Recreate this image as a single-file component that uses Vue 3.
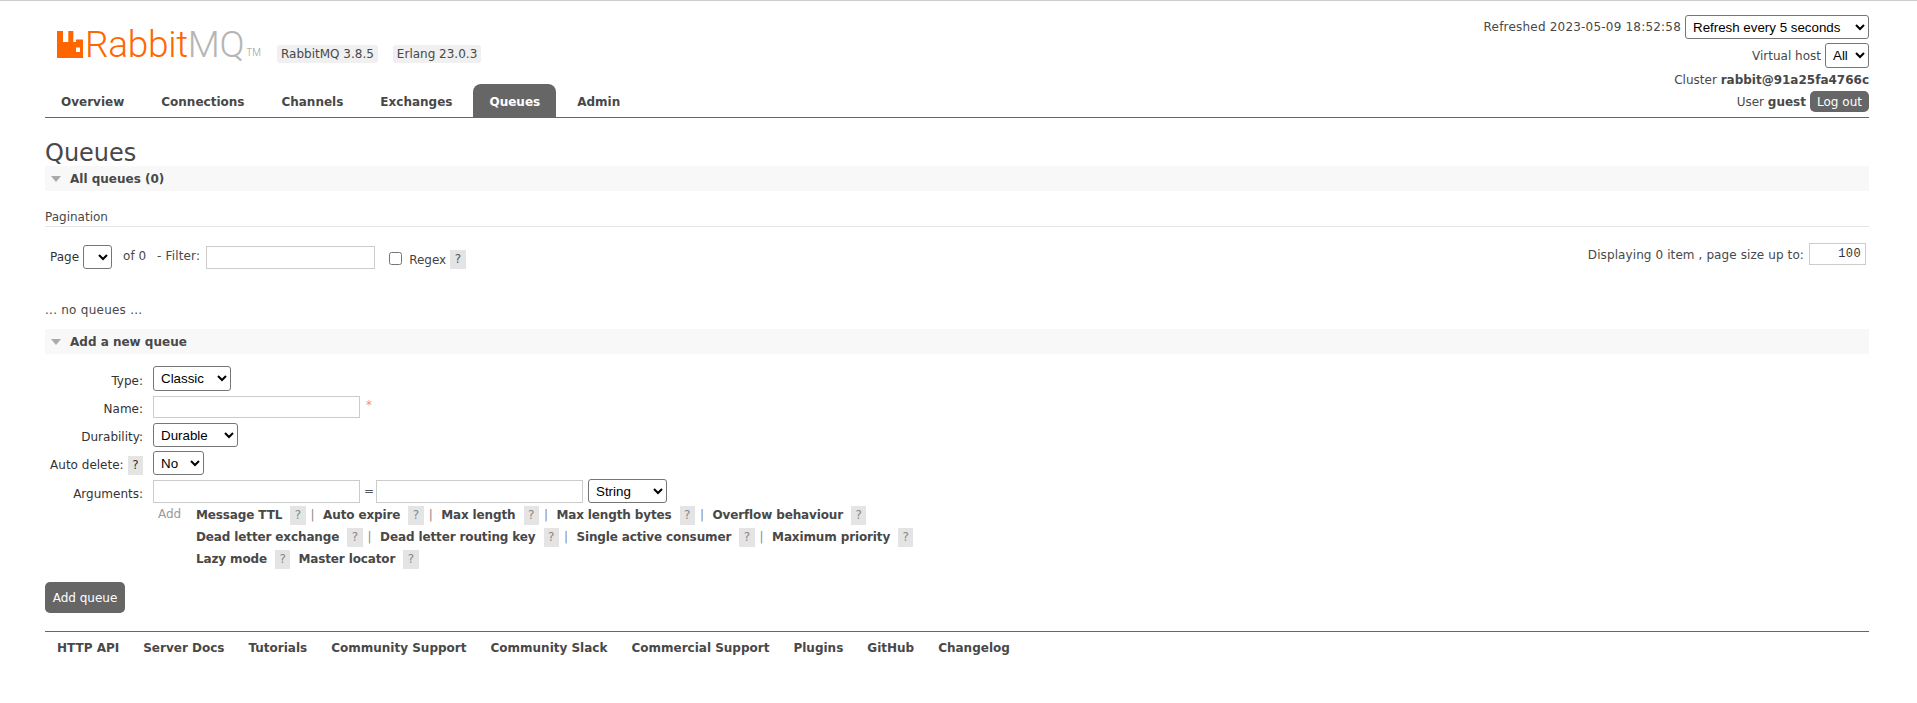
<script setup>
const tabs = ['Overview', 'Connections', 'Channels', 'Exchanges', 'Queues', 'Admin']
const footer = ['HTTP API', 'Server Docs', 'Tutorials', 'Community Support', 'Community Slack', 'Commercial Support', 'Plugins', 'GitHub', 'Changelog']
const argRows = [
  ['Message TTL', 'Auto expire', 'Max length', 'Max length bytes', 'Overflow behaviour'],
  ['Dead letter exchange', 'Dead letter routing key', 'Single active consumer', 'Maximum priority'],
  ['Lazy mode', 'Master locator'],
]
</script>

<template>
  <div class="page">
    <header class="header">
      <div class="brand">
        <div class="logo-row">
          <div class="logo">
            <svg class="mark" width="26" height="27" viewBox="0 0 26 27">
              <path fill="#ff6600" fill-rule="evenodd" d="M0 0h6v11h5.300V0h5v11h2.700V8.500H26V27H0zM19 16.500v4.500h4v-4.500z" />
            </svg>
            <span class="word"><span class="rabbit">Rabbit</span><span class="mq">MQ</span></span>
            <span class="tm">TM</span>
          </div>
          <span class="chip">RabbitMQ 3.8.5</span>
          <span class="chip">Erlang 23.0.3</span>
        </div>
        <nav class="tabs">
          <a v-for="t in tabs" :key="t" class="tab" :class="{ active: t === 'Queues' }">{{ t }}</a>
        </nav>
      </div>
      <div class="status">
        <div class="status-line refresh">
          <span class="stamp">Refreshed 2023-05-09 18:52:58</span>
          <select class="sel sel-refresh"><option>Refresh every 5 seconds</option></select>
        </div>
        <div class="status-line vhost">
          <span>Virtual host</span>
          <select class="sel sel-all"><option>All</option></select>
        </div>
        <div class="status-line cluster"><span>Cluster <b>rabbit@91a25fa4766c</b></span></div>
        <div class="status-line user">
          <span>User <b>guest</b></span>
          <button class="logout">Log out</button>
        </div>
      </div>
    </header>

    <main>
      <h1>Queues</h1>
      <div class="section-bar"><i class="arrow"></i>All queues (0)</div>

      <h3 class="pagination-title">Pagination</h3>
      <div class="pagination">
        <div class="pg-left">
          <span class="pg-label">Page</span>
          <select class="sel sel-page"></select>
          <span class="of">of 0</span>
          <span class="filter">- Filter:</span>
          <input class="inp inp-filter" type="text" />
          <input class="check" type="checkbox" />
          <span class="regex">Regex</span>
          <span class="help help-regex">?</span>
        </div>
        <div class="pg-right">
          <span>Displaying 0 item , page size up to:</span>
          <input class="inp inp-size" type="text" value="100" />
        </div>
      </div>

      <p class="none">... no queues ...</p>

      <div class="section-bar add-bar"><i class="arrow"></i>Add a new queue</div>

      <div class="form">
        <label class="row-type">Type:</label>
        <div class="field row-type"><select class="sel sel-type"><option>Classic</option></select></div>

        <label class="row-name">Name:</label>
        <div class="field row-name"><input class="inp inp-long" type="text" /><span class="req">*</span></div>

        <label class="row-dur">Durability:</label>
        <div class="field row-dur"><select class="sel sel-dur"><option>Durable</option></select></div>

        <label class="row-auto">Auto delete: <span class="help help-label">?</span></label>
        <div class="field row-auto"><select class="sel sel-no"><option>No</option></select></div>

        <label class="row-args">Arguments:</label>
        <div class="field row-args">
          <input class="inp inp-long inp-arg" type="text" />
          <span class="eq">=</span>
          <input class="inp inp-long inp-arg" type="text" />
          <select class="sel sel-str"><option>String</option></select>
        </div>

        <div class="args-help">
          <span class="add-link">Add</span>
          <div class="arg-lines">
            <div v-for="(r, i) in argRows" :key="i" class="arg-line">
              <template v-for="(a, j) in r" :key="a">
                <b>{{ a }}</b><span class="help">?</span><span v-if="j < r.length - 1" class="sep" :class="{ blank: i === 2 }"><template v-if="i < 2">|</template></span>
              </template>
            </div>
          </div>
        </div>
      </div>

      <button class="add-btn">Add queue</button>
    </main>

    <footer class="footer">
      <a v-for="f in footer" :key="f">{{ f }}</a>
    </footer>
  </div>
</template>

<style>
html, body { margin: 0; background: #fff; }
</style>

<style scoped>
.page {
  border-top: 1px solid #ccc;
  padding: 0 48px 0 45px;
  font: 12px Verdana, "DejaVu Sans", sans-serif;
  color: #484848;
}
b { font-weight: bold; }

.header {
  display: flex;
  justify-content: space-between;
  height: 116px;
  border-bottom: 1px solid #666;
}
.brand { display: flex; flex-direction: column; }
.logo-row { display: flex; align-items: flex-end; height: 62px; padding-left: 12px; }
.logo { display: flex; align-items: flex-end; width: 205px; height: 27px; margin-bottom: 5px; flex: none; }
.mark { flex: none; }
.word {
  font: 300 37px/27px Roboto, sans-serif;
  letter-spacing: -0.3px;
  margin-left: 2px;
  white-space: nowrap;
}
.rabbit { color: #ff6600; }
.mq { color: #b5b5b5; }
.tm { font: 300 10px/10px Roboto, sans-serif; color: #999; margin-left: 2px; }
.chip {
  background: #f0f0f0;
  border-radius: 3px;
  padding: 2px 4px;
  height: 14px;
  line-height: 14px;
  font-size: 12px;
  margin-left: 15px;
  white-space: nowrap;
}

.tabs { display: flex; gap: 5px; margin-top: 21px; height: 33px; }
.tab {
  font-weight: bold;
  padding: 0 16px;
  line-height: 36px;
  color: #484848;
  white-space: nowrap;
}
.tab.active { background: #666; color: #fff; border-radius: 8px 8px 0 0; }

.status { display: flex; flex-direction: column; align-items: flex-end; padding-top: 14px; }
.status-line { display: flex; align-items: center; gap: 4px; white-space: nowrap; }
.stamp { letter-spacing: 0.2px; }
.refresh { height: 24px; }
.vhost { height: 25px; margin-top: 4px; }
.cluster { height: 14px; margin-top: 5px; }
.user { height: 21px; margin-top: 4px; }
.sel {
  font: 13.333px "Liberation Sans", Arial, sans-serif;
  color: #000;
  background: #fff;
  border: 1px solid #767676;
  border-radius: 3px;
  box-sizing: border-box;
  padding: 0 0 0 3px;
}
.sel-refresh { width: 184px; height: 24px; }
.sel-all { width: 44px; height: 25px; }
.logout {
  background: #666;
  color: #fff;
  border: 0;
  border-radius: 5px;
  font: 12px Verdana, "DejaVu Sans", sans-serif;
  width: 59px;
  height: 21px;
  padding: 0;
}

h1 {
  font-size: 24px;
  font-weight: normal;
  line-height: 28px;
  height: 27px;
  margin: 21px 0 0;
  color: #484848;
}
.section-bar {
  display: flex;
  align-items: center;
  background: #f8f8f8;
  height: 25px;
  font-weight: bold;
}
.arrow {
  width: 0;
  height: 0;
  margin: 0 9px 0 6px;
  border-left: 5.5px solid transparent;
  border-right: 5.5px solid transparent;
  border-top: 6px solid #aaa;
}
.pagination-title {
  font-size: 12px;
  font-weight: normal;
  line-height: 14px;
  height: 14px;
  margin: 19px 0 0;
  padding-bottom: 2px;
  border-bottom: 1px solid #e4e4e4;
}
.pagination {
  display: flex;
  justify-content: space-between;
  margin-top: 18px;
  height: 25px;
}
.pg-left { display: flex; align-items: flex-start; }
.pg-label { margin: 5px 0 0 5px; color: #333; }
.sel-page { width: 29px; height: 24px; margin: 0 0 0 4px; }
.of { margin: 4px 0 0 11px; }
.filter { margin: 4px 0 0 11px; letter-spacing: 0.15px; }
.inp {
  box-sizing: border-box;
  border: 1px solid #ccc;
  background: #fff;
  padding: 1px 2px;
  margin: 0;
  border-radius: 0;
  outline: 0;
}
.inp-filter { width: 169px; height: 23px; margin: 1px 0 0 6px; }
.check { width: 13px; height: 13px; margin: 7px 0 0 14px; }
.regex { margin: 8px 0 0 7px; color: #444; }
.help {
  display: inline-block;
  background: #e4e4e4;
  color: #888;
  padding: 0 4.5px;
  line-height: 19px;
  height: 19px;
  font-weight: normal;
  letter-spacing: 0;
}
.help-regex { margin: 5px 0 0 4px; color: #555; }
.pg-right { display: flex; align-items: flex-start; gap: 5px; padding-right: 3px; }
.pg-right span { margin-top: 3px; letter-spacing: 0.1px; }
.inp-size {
  width: 57px;
  height: 22px;
  margin-top: -2px;
  text-align: right;
  font: 12px "Liberation Mono", monospace;
  letter-spacing: 0.4px;
  color: #333;
  padding-right: 4px;
}
.none { margin: 32px 0 0; line-height: 16px; height: 16px; letter-spacing: 0.25px; }
.add-bar { margin-top: 11px; }

.form {
  display: grid;
  grid-template-columns: 98px 1fr;
  column-gap: 10px;
  margin-top: 12px;
  color: #333;
}
.form label {
  display: flex;
  justify-content: flex-end;
  align-items: center;
  gap: 4px;
  padding-top: 4px;
  box-sizing: border-box;
  white-space: nowrap;
}
.field { display: flex; align-items: center; }
.row-type { height: 25px; }
.row-name { height: 22px; margin-top: 5px; }
.row-dur { height: 24px; margin-top: 5px; }
.row-auto { height: 24px; margin-top: 4px; }
.row-args { height: 24px; margin-top: 4px; }
.form label.row-args { padding-top: 5px; }
.sel-type { width: 78px; height: 25px; }
.sel-dur { width: 85px; height: 24px; }
.sel-no { width: 51px; height: 24px; }
.sel-str { width: 79px; height: 24px; margin-left: 5px; }
.inp-long { width: 207px; height: 22px; }
.inp-arg { height: 23px; }
.req { color: #f88; margin: -4px 0 0 6px; }
.eq { margin: 0 4px; color: #555; font-size: 12px; width: 8px; text-align: center; }
.help-label { margin-left: 0; color: #333; }

.args-help { grid-column: 2; display: flex; margin-top: 1px; }
.add-link { color: #999; width: 43px; padding-left: 5px; box-sizing: border-box; line-height: 20px; flex: none; }
.arg-lines { display: flex; flex-direction: column; color: #484848; }
.arg-line { display: flex; align-items: center; height: 22px; white-space: nowrap; }
.arg-line b { letter-spacing: -0.13px; }
.arg-line .help { margin-left: 8px; }
.sep { color: #888; margin: 0 8.5px 0 5px; width: 4px; }
.sep.blank { margin: 0 4px 0 0; }

.add-btn {
  display: block;
  margin-top: 12px;
  width: 80px;
  height: 31px;
  background: #666;
  color: #fff;
  border: 0;
  border-radius: 5px;
  font: 12px Verdana, "DejaVu Sans", sans-serif;
  padding: 0;
}
.footer {
  display: flex;
  gap: 24px;
  margin-top: 18px;
  border-top: 1px solid #666;
  padding: 9px 0 0 12px;
  height: 39px;
  font-weight: bold;
  white-space: nowrap;
}
</style>
